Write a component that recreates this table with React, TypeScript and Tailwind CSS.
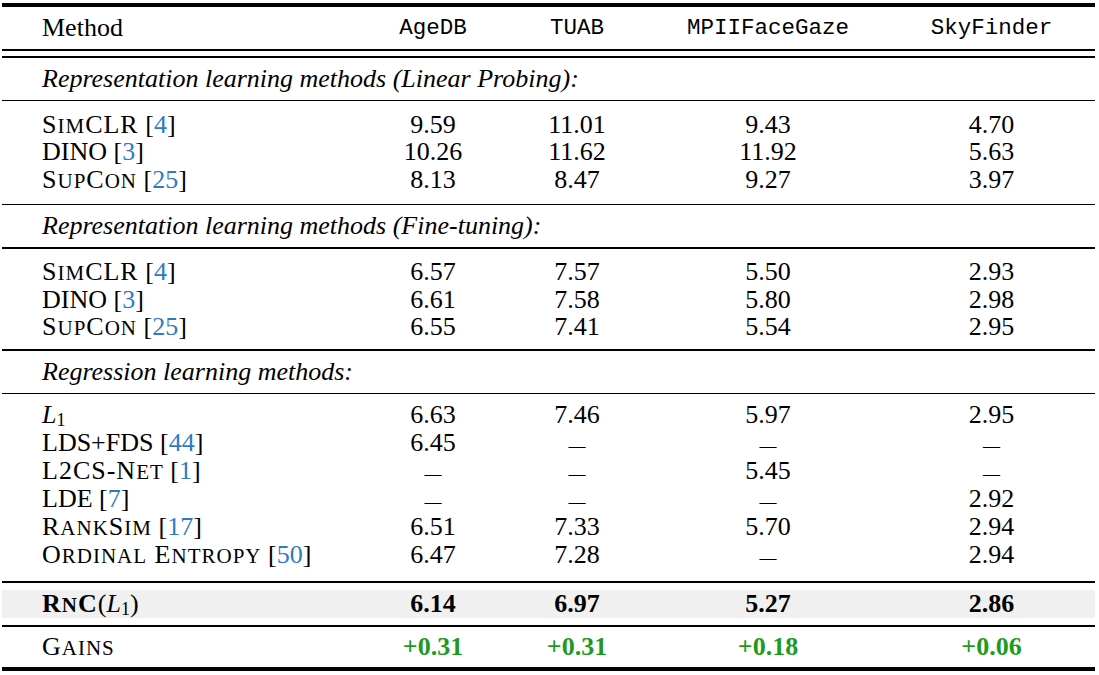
import React from "react";

type Row = {
  method: React.ReactNode;
  vals: string[];
};

const cols = "grid grid-cols-[358px_146px_142px_240px_207px]";

function Cite({ n }: { n: string }) {
  return (
    <span>
      [<span className="text-[#2f7bbf]">{n}</span>]
    </span>
  );
}

// LaTeX-style small caps: lowercase letters become smaller capitals
function SC({ children }: { children: string }) {
  const parts = children.match(/[a-z]+|[^a-z]+/g) || [];
  return (
    <span className="tracking-[1px]">
      {parts.map((p, i) =>
        /[a-z]/.test(p) ? (
          <span key={i} className="text-[21px]">{p.toUpperCase()}</span>
        ) : (
          <span key={i}>{p}</span>
        )
      )}
    </span>
  );
}

function L1() {
  return (
    <span>
      <span className="italic">L</span>
      <span className="text-[18px] relative top-[3px]">1</span>
    </span>
  );
}

const linear: Row[] = [
  { method: <><SC>SimCLR</SC> <Cite n="4" /></>, vals: ["9.59", "11.01", "9.43", "4.70"] },
  { method: <>DINO <Cite n="3" /></>, vals: ["10.26", "11.62", "11.92", "5.63"] },
  { method: <><SC>SupCon</SC> <Cite n="25" /></>, vals: ["8.13", "8.47", "9.27", "3.97"] },
];

const finetune: Row[] = [
  { method: <><SC>SimCLR</SC> <Cite n="4" /></>, vals: ["6.57", "7.57", "5.50", "2.93"] },
  { method: <>DINO <Cite n="3" /></>, vals: ["6.61", "7.58", "5.80", "2.98"] },
  { method: <><SC>SupCon</SC> <Cite n="25" /></>, vals: ["6.55", "7.41", "5.54", "2.95"] },
];

const D = "—";

const regression: Row[] = [
  { method: <L1 />, vals: ["6.63", "7.46", "5.97", "2.95"] },
  { method: <>LDS+FDS <Cite n="44" /></>, vals: ["6.45", D, D, D] },
  { method: <><SC>L2CS-Net</SC> <Cite n="1" /></>, vals: [D, D, "5.45", D] },
  { method: <>LDE <Cite n="7" /></>, vals: [D, D, D, "2.92"] },
  { method: <><SC>RankSim</SC> <Cite n="17" /></>, vals: ["6.51", "7.33", "5.70", "2.94"] },
  { method: <><SC>Ordinal Entropy</SC> <Cite n="50" /></>, vals: ["6.47", "7.28", D, "2.94"] },
];

function Val({ v }: { v: string }) {
  if (v === D) return <span className="text-[17px]">{"\u2014"}</span>;
  return <span>{v}</span>;
}

function Rows({ rows, h, pt, pb }: { rows: Row[]; h: string; pt: string; pb: string }) {
  return (
    <div className={`${pt} ${pb}`}>
      {rows.map((r, i) => (
        <div key={i} className={`${cols} ${h} items-center`}>
          <div className="pl-[40px] whitespace-nowrap">{r.method}</div>
          {r.vals.map((v, j) => (
            <div key={j} className="text-center">
              <Val v={v} />
            </div>
          ))}
        </div>
      ))}
    </div>
  );
}

function Rule() {
  return <div className="h-[1.5px] bg-black" />;
}

function Title({ children }: { children: React.ReactNode }) {
  return <div className="h-[42px] flex items-center pl-[40px] italic">{children}</div>;
}

export default function App() {
  return (
    <div className="w-[1099px] h-[675px] bg-white text-black text-[26px] leading-none font-['Liberation_Serif',serif] overflow-hidden">
      <div className="ml-[2px] w-[1093px] pt-[3px]">
        <div className="h-[4px] bg-black" />
        <div className={`${cols} h-[42px] items-center`}>
          <div className="pl-[40px]">Method</div>
          {["AgeDB", "TUAB", "MPIIFaceGaze", "SkyFinder"].map((d) => (
            <div key={d} className="text-center font-['Liberation_Mono',monospace] text-[22.5px]">
              {d}
            </div>
          ))}
        </div>
        <Rule />
        <div className="h-[5.5px]" />
        <Rule />

        <Title>Representation learning methods (Linear Probing):</Title>
        <Rule />
        <Rows rows={linear} h="h-[27.5px]" pt="pt-[10px]" pb="pb-[10px]" />
        <Rule />

        <Title>Representation learning methods (Fine-tuning):</Title>
        <Rule />
        <Rows rows={finetune} h="h-[27.5px]" pt="pt-[10px]" pb="pb-[8px]" />
        <Rule />

        <Title>Regression learning methods:</Title>
        <Rule />
        <Rows rows={regression} h="h-[28px]" pt="pt-[7px]" pb="pb-[12px]" />
        <Rule />

        <div className="pt-[7.5px] pb-[7px]">
          <div className={`${cols} h-[28px] items-center bg-[#f0f0f0] font-bold`}>
            <div className="pl-[40px]">
              <SC>RnC</SC>
              <span className="font-normal">
                (<L1 />)
              </span>
            </div>
            {["6.14", "6.97", "5.27", "2.86"].map((v) => (
              <div key={v} className="text-center">{v}</div>
            ))}
          </div>
        </div>
        <Rule />

        <div className={`${cols} h-[40px] items-center`}>
          <div className="pl-[40px]">
            <SC>Gains</SC>
          </div>
          {["+0.31", "+0.31", "+0.18", "+0.06"].map((v, i) => (
            <div key={i} className="text-center font-bold text-[#1e9b1e]">{v}</div>
          ))}
        </div>
        <div className="h-[4px] bg-black" />
      </div>
    </div>
  );
}
